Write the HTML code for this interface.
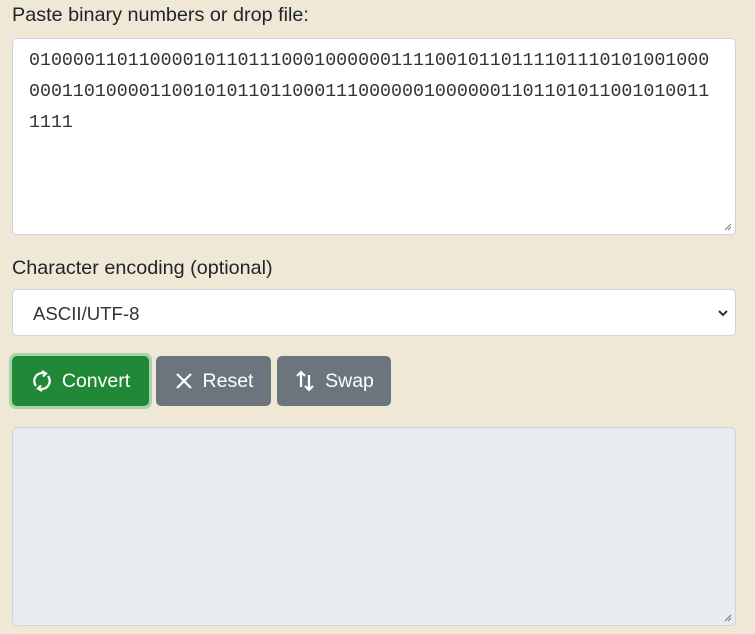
<!DOCTYPE html>
<html><head><style>
body{margin:0;background:#efe8d7;font-family:"Liberation Sans",sans-serif;color:#212529;width:755px;height:634px;overflow:hidden;position:relative}
.lbl{position:absolute;left:12px;font-size:19.8px}
.box{position:absolute;left:12px;width:724px;border:1px solid #ced4da;border-radius:5px;box-sizing:border-box}
.ta{top:38px;height:197px;background:#fff;font-family:"Liberation Mono",monospace;font-size:18.3px;line-height:31px;padding:7px 16px 6px;white-space:pre;color:#333;font-weight:bold;-webkit-text-stroke:0}
.sel{top:289px;height:47px;background:#fff;font-size:18.6px;padding:13px 20px;color:#333}
.out{top:427px;height:199px;background:#e9ecef}
.btn{position:absolute;top:356px;height:50px;border-radius:5px;color:#fff;font-size:19.5px;display:flex;align-items:center;justify-content:center;gap:9px;box-sizing:border-box}
.grip{position:absolute;right:3px;bottom:3px;width:9px;height:9px}
</style></head><body>
<div class="lbl" style="top:4px">Paste binary numbers or drop file:</div>
<div class="box ta" style="font-weight:normal">01000011011000010110111000100000011110010110111101110101001000
00011010000110010101101100011100000010000001101101011001010011
1111<svg class="grip" viewBox="0 0 9 9"><path d="M8 2L2 8M8 5L5 8" stroke="#777" stroke-width="1"/></svg></div>
<div class="lbl" style="top:257px">Character encoding (optional)</div>
<div class="box sel">ASCII/UTF-8
<svg style="position:absolute;right:6px;top:18px" width="12" height="10" viewBox="0 0 12 10"><path d="M2 3l4 4 4-4" stroke="#333" stroke-width="2" fill="none"/></svg></div>
<div class="btn" style="left:9px;top:353px;width:143px;height:56px;background:#a7d4ab;border-radius:7px"></div>
<div class="btn" style="left:12px;width:137px;background:#218838">
<svg width="22" height="24" viewBox="0 0 22 24" fill="none" stroke="#fff" stroke-width="2.2"><path d="M5 17A8 8 0 0 1 14 4.5"/><path d="M11 2l4 2.5-3 3"/><path d="M17 7A8 8 0 0 1 8 19.5"/><path d="M11 22l-4-2.5 3-3"/></svg>Convert</div>
<div class="btn" style="left:156px;width:115px;background:#6c757d">
<svg width="20" height="20" viewBox="0 0 20 20" stroke="#fff" stroke-width="2.2"><path d="M3 3L17 17M17 3L3 17"/></svg>Reset</div>
<div class="btn" style="left:277px;width:114px;background:#6c757d">
<svg width="22" height="24" viewBox="0 0 22 24" stroke="#fff" stroke-width="2.2" fill="none"><path d="M7 18V3M3 7l4-4 4 4"/><path d="M15 6v15M11 17l4 4 4-4"/></svg>Swap</div>
<div class="box out"><svg class="grip" viewBox="0 0 9 9"><path d="M8 2L2 8M8 5L5 8" stroke="#777" stroke-width="1"/></svg></div>
</body></html>
